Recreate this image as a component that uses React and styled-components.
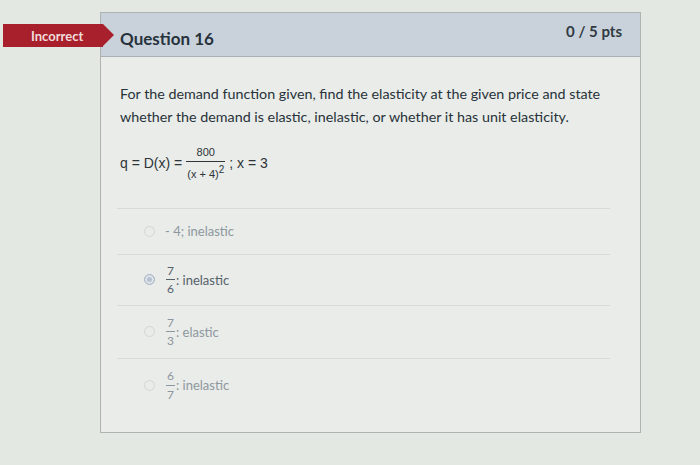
import React from "react";
import styled, { createGlobalStyle } from "styled-components";

const GlobalStyle = createGlobalStyle`
  html, body {
    margin: 0;
    padding: 0;
    background: #e4e8e2;
    font-family: Lato, "Open Sans", sans-serif;
  }
`;

const Page = styled.div`
  width: 700px;
  height: 465px;
  padding: 12px 0 0 100px;
  box-sizing: border-box;
`;

const Card = styled.div`
  position: relative;
  width: 541px;
  height: 421px;
  box-sizing: border-box;
  border: 1px solid #aeb3b2;
  background: #e9ece8;
`;

const Tag = styled.div`
  position: absolute;
  left: -98px;
  top: 11px;
  width: 100px;
  height: 23px;
  background: #a8202b;
  color: #f1dcdc;
  font-size: 13px;
  font-weight: 700;
  display: flex;
  align-items: center;
  padding-left: 28px;
  box-sizing: border-box;
  &::after {
    content: "";
    position: absolute;
    right: -11px;
    top: 0;
    border-top: 11.5px solid transparent;
    border-bottom: 11.5px solid transparent;
    border-left: 11px solid #a8202b;
  }
`;

const Header = styled.div`
  height: 43px;
  background: #c9d2db;
  border-bottom: 1px solid #a9b0b3;
  display: flex;
  justify-content: space-between;
  padding: 0 18px 0 19px;
`;

const Title = styled.h2`
  margin: 15px 0 0;
  font-size: 17px;
  font-weight: 700;
  color: #26323c;
`;

const Points = styled.span`
  margin-top: 9px;
  font-size: 15px;
  font-weight: 700;
  color: #303a42;
`;

const Body = styled.div`
  padding: 25px 30px 0 19px;
`;

const Prompt = styled.p`
  margin: 0;
  font-size: 14.3px;
  line-height: 23px;
  color: #28323a;
`;

const Formula = styled.div`
  margin: 18px 0 0;
  display: flex;
  align-items: center;
  gap: 3px;
  font-family: "Liberation Sans", Arial, sans-serif;
  font-size: 14px;
  color: #2f3438;
`;

const Frac = styled.span`
  display: inline-flex;
  flex-direction: column;
  align-items: center;
  font-size: ${(p) => p.size || 11}px;
  line-height: 1.15;
  margin: 0 1px;
`;

const Num = styled.span`
  align-self: stretch;
  text-align: center;
  padding: 0 ${(p) => p.pad ?? 4}px 2px;
  border-bottom: 1px solid currentColor;
`;

const Den = styled.span`
  padding: 2px 1px 0;
`;

const Answers = styled.div`
  margin: 28px 0 0 -3px;
  border-top: 1px solid #d6dbd7;
`;

const Row = styled.div`
  height: ${(p) => p.h}px;
  border-bottom: ${(p) => (p.last ? "none" : "1px solid #d6dbd7")};
  display: flex;
  align-items: center;
  gap: 6px;
  padding-left: 27px;
  box-sizing: border-box;
  font-size: 13px;
  color: ${(p) => (p.selected ? "#56616c" : "#8e97a0")};
`;

const Radio = styled.span`
  width: 9px;
  height: 9px;
  border-radius: 50%;
  border: 1px solid ${(p) => (p.selected ? "#aab4c4" : "#d2d8d6")};
  background: ${(p) => (p.selected ? "#b6c0d0" : "transparent")};
  box-shadow: ${(p) => (p.selected ? "inset 0 0 0 2px #dfe3ea" : "none")};
  margin-right: 4px;
  flex: none;
`;

const AnswerText = styled.span`
  display: flex;
  align-items: center;
`;

const answers = [
  { text: "- 4; inelastic", h: 46 },
  { num: 7, den: 6, text: ": inelastic", h: 51, selected: true },
  { num: 7, den: 3, text: ": elastic", h: 53 },
  { num: 6, den: 7, text: ": inelastic", h: 53, last: true },
];

export default function App() {
  return (
    <>
      <GlobalStyle />
      <Page>
        <Card>
          <Tag>Incorrect</Tag>
          <Header>
            <Title>Question 16</Title>
            <Points>0 / 5 pts</Points>
          </Header>
          <Body>
            <Prompt>
              For the demand function given, find the elasticity at the given price and state
              whether the demand is elastic, inelastic, or whether it has unit elasticity.
            </Prompt>
            <Formula>
              <span>q = D(x) =</span>
              <Frac>
                <Num>800</Num>
                <Den>
                  (x + 4)<sup style={{ fontSize: "10px" }}>2</sup>
                </Den>
              </Frac>
              <span>; x = 3</span>
            </Formula>
            <Answers>
              {answers.map((a, i) => (
                <Row key={i} h={a.h} selected={a.selected} last={a.last}>
                  <Radio selected={a.selected} />
                  <AnswerText>
                    {a.num && (
                      <Frac size={12}>
                        <Num pad={1}>{a.num}</Num>
                        <Den>{a.den}</Den>
                      </Frac>
                    )}
                    {a.text}
                  </AnswerText>
                </Row>
              ))}
            </Answers>
          </Body>
        </Card>
      </Page>
    </>
  );
}
